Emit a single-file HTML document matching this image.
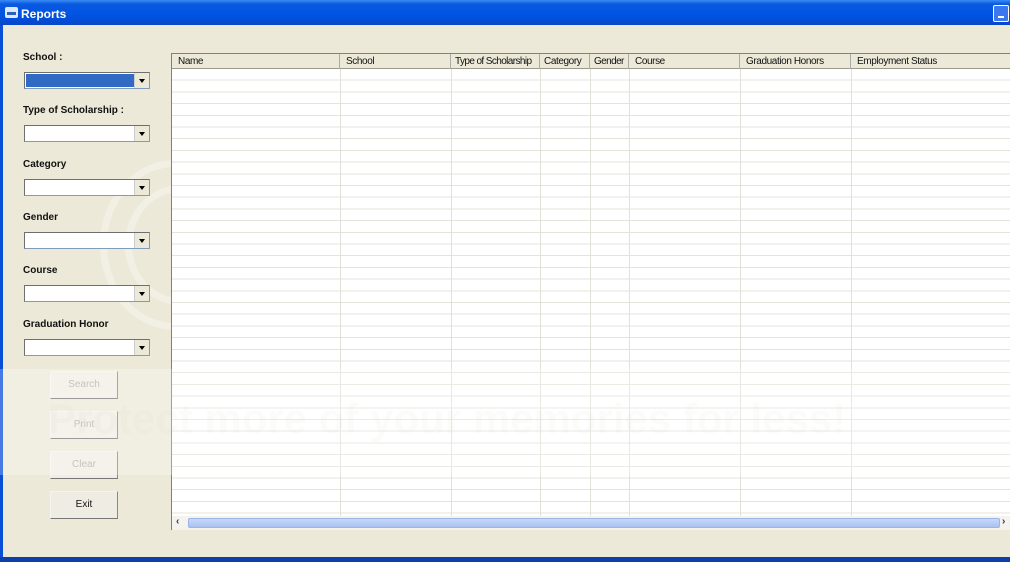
<!DOCTYPE html>
<html><head><style>
*{margin:0;padding:0;box-sizing:border-box}
body{width:1023px;height:562px;background:#fff;position:relative;overflow:hidden;font-family:"Liberation Sans",sans-serif}
.win{position:absolute;left:0;top:0;width:1010px;height:562px;background:#ece9d8}
.title{position:absolute;left:0;top:0;width:1010px;height:25px;background:linear-gradient(#3a8cf5 0,#0a5ae0 4px,#0054e3 60%,#0846c8 100%)}
.title span{position:absolute;left:21px;top:7px;color:#fff;font-weight:bold;font-size:12px}
.icon{position:absolute;left:5px;top:7px;width:13px;height:11px;background:#dfe8f8;border-radius:2px}
.icon:after{content:"";position:absolute;left:2px;top:5px;width:9px;height:3px;background:#2c5fc0}
.minbtn{position:absolute;left:993px;top:5px;width:16px;height:17px;border:1px solid #fff;border-radius:2px;background:#3b78ef}
.minbtn:after{content:"";position:absolute;left:4px;top:10px;width:6px;height:2px;background:#fff}
.lb{position:absolute;left:0;top:25px;width:3px;height:537px;background:#0a4ed8}
.bb{position:absolute;left:0;top:557px;width:1010px;height:5px;background:#0e3fa8}
.lbl{position:absolute;left:23px;font-size:10px;font-weight:bold;color:#111}
.cb{position:absolute;left:24px;width:126px;height:17px;border:1px solid #7f9db9;border-top-color:#6f6f6f;border-left-color:#6f6f6f;background:#fff}
.cb .sel{position:absolute;left:1px;top:1px;width:108px;height:13px;background:#316ac5}
.cb .ar{position:absolute;right:0;top:0;width:15px;height:15px;background:#ece9d8;border-left:1px solid #ccc}
.cb .ar:after{content:"";position:absolute;left:4px;top:6px;border-left:3px solid transparent;border-right:3px solid transparent;border-top:4px solid #000}
.btn{position:absolute;left:50px;width:68px;height:28px;border:1px solid #f4f4f0;border-right-color:#888;border-bottom-color:#777;background:#f0eee4;font-size:10px;text-align:center;line-height:26px;color:#b0b0a8}
.grid{position:absolute;left:171px;top:53px;width:839px;height:477px;border:1px solid #808080;border-right:none;background:#fff}
.hdr{position:absolute;left:0;top:0;width:838px;height:15px;background:#ece9d8;border-bottom:1px solid #9c9a8c}
.hdr div{position:absolute;top:0;height:15px;border-right:1px solid #aaa;font-size:10px;line-height:15px;padding-left:6px;color:#111;white-space:nowrap;overflow:hidden;letter-spacing:-0.4px}
.rows{position:absolute;left:0;top:15px;width:838px;height:447px;background:repeating-linear-gradient(#fff 0,#fff 10.7px,#e4e3dc 10.7px,#e4e3dc 11.7px)}
.vl{position:absolute;top:15px;width:1px;height:447px;background:#e2e1d9}
.sb{position:absolute;left:0;top:462px;width:838px;height:14px;background:#f4f3ee}
.thumb{position:absolute;left:16px;top:2px;width:812px;height:10px;background:linear-gradient(#c8d8f8,#a9c2f2);border:1px solid #9bb4ea;border-radius:2px}
.wm{position:absolute;left:0;top:369px;width:1010px;height:106px;background:rgba(255,255,255,0.25)}
.wmt{position:absolute;left:48px;top:395px;font-size:42px;font-weight:bold;color:rgba(200,198,190,0.08);white-space:nowrap}
.ring{position:absolute;border:7px solid rgba(255,255,255,0.35);border-radius:50%}
</style></head><body>
<div class="win">
<div class="title"><div class="icon"></div><span>Reports</span><div class="minbtn"></div></div>
<div class="lb"></div>
<div class="ring" style="left:100px;top:160px;width:150px;height:170px"></div>
<div class="ring" style="left:125px;top:185px;width:110px;height:120px"></div>
<div class="lbl" style="top:52px">School :</div>
<div class="cb" style="top:72px"><div class="sel"></div><div class="ar"></div></div>
<div class="lbl" style="top:105px">Type of Scholarship :</div>
<div class="cb" style="top:125px"><div class="ar"></div></div>
<div class="lbl" style="top:159px">Category</div>
<div class="cb" style="top:179px"><div class="ar"></div></div>
<div class="lbl" style="top:212px">Gender</div>
<div class="cb" style="top:232px"><div class="ar"></div></div>
<div class="lbl" style="top:265px">Course</div>
<div class="cb" style="top:285px"><div class="ar"></div></div>
<div class="lbl" style="top:319px">Graduation Honor</div>
<div class="cb" style="top:339px"><div class="ar"></div></div>
<div class="btn" style="top:371px">Search</div>
<div class="btn" style="top:411px">Print</div>
<div class="btn" style="top:451px">Clear</div>
<div class="btn" style="top:491px;color:#111;background:#efede3">Exit</div>
<div class="grid">
<div class="hdr">
<div style="left:0;width:168px">Name</div>
<div style="left:168px;width:111px">School</div>
<div style="left:279px;width:89px;padding-left:4px;letter-spacing:-0.6px">Type of Scholarship</div>
<div style="left:368px;width:50px;padding-left:4px">Category</div>
<div style="left:418px;width:39px;padding-left:4px;letter-spacing:-0.6px">Gender</div>
<div style="left:457px;width:111px">Course</div>
<div style="left:568px;width:111px">Graduation Honors</div>
<div style="left:679px;width:159px;border-right:none">Employment Status</div>
</div>
<div class="rows"></div>
<div class="vl" style="left:168px"></div><div class="vl" style="left:279px"></div><div class="vl" style="left:368px"></div><div class="vl" style="left:418px"></div><div class="vl" style="left:457px"></div><div class="vl" style="left:568px"></div><div class="vl" style="left:679px"></div>
<div class="sb"><span style="position:absolute;left:4px;top:0;font-size:10px;font-weight:bold;color:#335">&lsaquo;</span><div class="thumb"></div><span style="position:absolute;left:830px;top:0;font-size:10px;font-weight:bold;color:#335">&rsaquo;</span></div>
</div>
<div class="wm"></div>
<div class="wmt">Protect more of your memories for less!</div>
<div class="bb"></div>
</div>
</body></html>
